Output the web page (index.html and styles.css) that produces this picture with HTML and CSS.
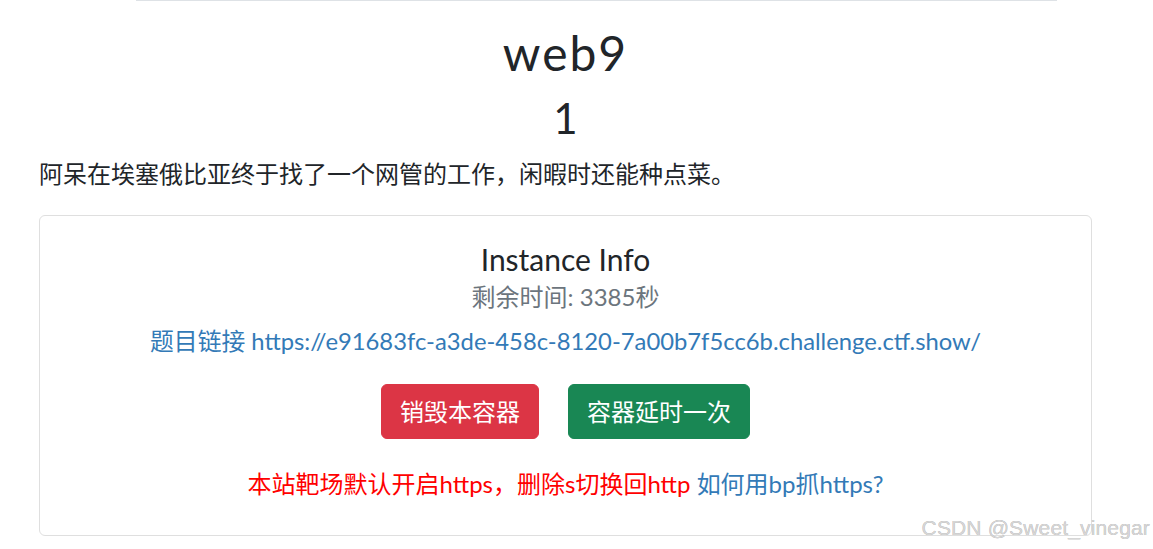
FILE: index.html
```html
<!DOCTYPE html>
<html lang="zh-CN">
<head>
<meta charset="utf-8">
<title>web9</title>
<link rel="stylesheet" href="styles.css">
</head>
<body>
<div class="page">
  <div class="rule"></div>
  <h1 class="title">web9</h1>
  <h2 class="score">1</h2>
  <p class="desc">阿呆在埃塞俄比亚终于找了一个网管的工作，闲暇时还能种点菜。</p>
  <div class="card">
    <h3 class="card-title">Instance Info</h3>
    <p class="timer">剩余时间: 3385秒</p>
    <p class="link-line"><a class="link" href="#">题目链接 https://e91683fc-a3de-458c-8120-7a00b7f5cc6b.challenge.ctf.show/</a></p>
    <div class="actions">
      <button class="btn btn-danger" type="button">销毁本容器</button>
      <button class="btn btn-success" type="button">容器延时一次</button>
    </div>
    <p class="notice"><span class="warn">本站靶场默认开启https，删除s切换回http</span> <a class="link" href="#">如何用bp抓https?</a></p>
  </div>
</div>
<div class="watermark">CSDN @Sweet_vinegar</div>
</body>
</html>
```

FILE: styles.css
```css
html, body {
  margin: 0;
  padding: 0;
  background: #ffffff;
}
body {
  font-family: Lato, "Noto Sans CJK SC", sans-serif;
  font-size: 24px;
  line-height: 36px;
  color: #212529;
  position: relative;
  height: 549px;
  overflow: hidden;
}
.page {
  padding: 0 61px 0 39px;
}
.rule {
  height: 0;
  border-top: 1px solid #dee2e6;
  margin: 0 35px 0 97px;
}
.title {
  margin: 23px 0 0;
  font-size: 48px;
  line-height: 58px;
  font-weight: 400;
  letter-spacing: 2px;
  text-align: center;
}
.score {
  margin: 11px 0 0;
  font-size: 42px;
  line-height: 50px;
  font-weight: 400;
  text-align: center;
}
.desc {
  margin: 13px 0 0;
}
.card {
  margin-top: 23px;
  border: 1px solid #dfdfdf;
  border-radius: 6px;
  padding: 25px 20px 33px;
  text-align: center;
}
.card-title {
  margin: 0;
  font-size: 30px;
  line-height: 36px;
  font-weight: 400;
}
.timer {
  margin: 2px 0 0;
  color: #6c757d;
}
.link-line {
  margin: 8px 0 0;
  font-size: 23.8px;
}
.link {
  color: #337ab7;
  text-decoration: none;
}
.actions {
  margin-top: 25px;
  display: flex;
  justify-content: center;
  gap: 29px;
}
.btn {
  font-family: Lato, "Noto Sans CJK SC", sans-serif;
  font-size: 24px;
  line-height: 35px;
  padding: 9px 18px;
  border: 1px solid transparent;
  border-radius: 6px;
  color: #ffffff;
  cursor: pointer;
}
.btn-danger {
  background: #dc3545;
  border-color: #dc3545;
}
.btn-success {
  background: #198754;
  border-color: #198754;
}
.notice {
  margin: 27px 0 0;
}
.warn {
  color: #ff0000;
}
.watermark {
  position: absolute;
  right: 3px;
  bottom: 9px;
  font-family: "Liberation Sans", Arial, sans-serif;
  font-size: 21px;
  line-height: 24px;
  letter-spacing: 0.15px;
  color: #d6d6d6;
  text-shadow: 0 0 0.6px #9a9a9a;
}
```
